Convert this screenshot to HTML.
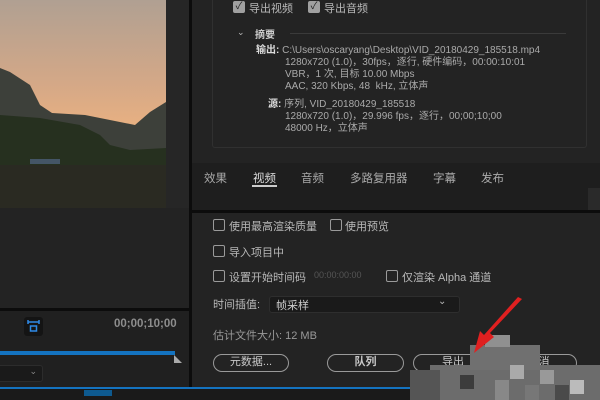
<!DOCTYPE html>
<html><head><meta charset="utf-8"><style>
body{margin:0;width:600px;height:400px;overflow:hidden;background:#1e1e1e;font-family:"Liberation Sans","Noto Sans CJK SC",sans-serif;position:relative;color:#b8b8b8}
div{position:absolute;box-sizing:border-box}
.t{font-size:11px;white-space:nowrap}
.cb{width:12px;height:12px;border:1.5px solid #9a9a9a;border-radius:2px}
.cbc{width:12px;height:12px;background:#a0a0a0;border-radius:2px;color:#222;font-size:10px;line-height:12px;text-align:center}
.btn{height:18px;border:1.5px solid #9a9a9a;border-radius:9px;font-size:11px;text-align:center;line-height:15px;color:#c8c8c8}
.s{font-size:10px;line-height:12px;color:#aaa}
</style></head><body>
<div style="left:0;top:0;width:166px;height:208px;background:linear-gradient(180deg,#b0a092 0%,#d4a887 40%,#e7b082 60%,#3a3a2a 62%,#2c3020 100%)"></div>
<svg style="position:absolute;left:0;top:0" width="166" height="208">
<polygon points="0,68 10,72 30,85 40,105 52,113 85,115 100,118 135,125 150,112 166,102 166,208 0,208" fill="#3d403a"/>
<polygon points="0,115 40,118 80,125 100,135 110,145 130,150 166,148 166,208 0,208" fill="#26301f"/>
<rect x="0" y="165" width="166" height="43" fill="#2a2a22"/>
<rect x="30" y="159" width="30" height="5" fill="#445566"/>
</svg>
<div style="left:166px;top:0;width:24px;height:400px;background:#262626"></div>
<div style="left:189px;top:0;width:3px;height:400px;background:#0c0c0c"></div>
<div style="left:0;top:208px;width:189px;height:100px;background:#232323"></div>
<div style="left:0;top:308px;width:189px;height:3px;background:#0c0c0c"></div>
<div style="left:0;top:311px;width:189px;height:77px;background:#202020"></div>
<div style="left:24px;top:317px;width:19px;height:19px;background:#141414;border-radius:3px"></div>
<svg style="position:absolute;left:26px;top:319px" width="15" height="15"><path d="M2 3H13M2 1V5M13 1V5M4.5 7H10.5V12H4.5Z" stroke="#2e8ae6" stroke-width="1.5" fill="none"/></svg>
<div class="t" style="left:114px;top:318px;font-size:11.5px;font-weight:bold;color:#8d8d8d">00;00;10;00</div>
<div style="left:0;top:351px;width:175px;height:4px;background:#1473c0"></div>
<svg style="position:absolute;left:174px;top:355px" width="10" height="10"><polygon points="0,0 0,8 8,8" fill="#aaa"/></svg>
<div style="left:-5px;top:365px;width:48px;height:17px;background:#1a1a1a;border:1px solid #2c2c2c;border-radius:3px;font-size:9px;color:#888;text-align:right;padding-right:5px">⌄</div>
<div style="left:0;top:387px;width:600px;height:2px;background:#1473c0"></div>
<div style="left:0;top:389px;width:600px;height:11px;background:#1a1a1a"></div>
<div style="left:84px;top:390px;width:28px;height:6px;background:#0e5a8f"></div>
<div style="left:192px;top:0;width:408px;height:163px;background:#232323"></div>
<div style="left:212px;top:-5px;width:375px;height:153px;border:1px solid #303030;border-radius:3px"></div>
<div class="cbc" style="left:233px;top:1px">✓</div><div class="t" style="left:249px;top:0;color:#b8b8b8">导出视频</div>
<div class="cbc" style="left:308px;top:1px">✓</div><div class="t" style="left:324px;top:0;color:#b8b8b8">导出音频</div>
<div class="t" style="left:237px;top:27px;font-size:9px">⌄</div>
<div class="t" style="left:255px;top:26px;font-weight:bold;color:#ccc;font-size:10px">摘要</div>
<div style="left:290px;top:33px;width:276px;height:1px;background:#3a3a3a"></div>
<div class="t s" style="left:256px;top:45px"><b style="color:#ddd">输出:</b> C:\Users\oscaryang\Desktop\VID_20180429_185518.mp4</div>
<div class="t s" style="left:285px;top:57px">1280x720 (1.0)，30fps，逐行, 硬件编码，00:00:10:01<br>VBR，1 次, 目标 10.00 Mbps<br>AAC, 320 Kbps, 48 &nbsp;kHz, 立体声</div>
<div class="t s" style="left:268px;top:99px"><b style="color:#ddd">源:</b> 序列, VID_20180429_185518</div>
<div class="t s" style="left:285px;top:111px">1280x720 (1.0)，29.996 fps，逐行，00;00;10;00<br>48000 Hz，立体声</div>
<div class="t" style="left:204px;top:170px;color:#aaa;font-size:11.5px">效果</div>
<div class="t" style="left:253px;top:170px;color:#ddd;font-size:11.5px">视频</div>
<div style="left:252px;top:185px;width:25px;height:2px;background:#ccc"></div>
<div class="t" style="left:301px;top:170px;color:#aaa;font-size:11.5px">音频</div>
<div class="t" style="left:350px;top:170px;color:#aaa;font-size:11.5px">多路复用器</div>
<div class="t" style="left:433px;top:170px;color:#aaa;font-size:11.5px">字幕</div>
<div class="t" style="left:481px;top:170px;color:#aaa;font-size:11.5px">发布</div>
<div style="left:192px;top:188px;width:408px;height:22px;background:#1e1e1e"></div>
<div style="left:588px;top:188px;width:12px;height:22px;background:#2a2a2a"></div>
<div style="left:192px;top:210px;width:408px;height:3px;background:#0c0c0c"></div>
<div style="left:192px;top:213px;width:408px;height:174px;background:#232323"></div>
<div class="cb" style="left:213px;top:219px"></div><div class="t" style="left:229px;top:218px">使用最高渲染质量</div>
<div class="cb" style="left:330px;top:219px"></div><div class="t" style="left:345px;top:218px">使用预览</div>
<div class="cb" style="left:213px;top:245px"></div><div class="t" style="left:229px;top:244px">导入项目中</div>
<div class="cb" style="left:213px;top:270px"></div><div class="t" style="left:229px;top:269px">设置开始时间码</div>
<div class="t" style="left:314px;top:270px;font-size:9px;color:#555">00:00:00:00</div>
<div class="cb" style="left:386px;top:270px"></div><div class="t" style="left:402px;top:269px">仅渲染 Alpha 通道</div>
<div class="t" style="left:213px;top:296px">时间插值:</div>
<div style="left:269px;top:296px;width:191px;height:17px;background:#1a1a1a;border:1px solid #2e2e2e;border-radius:3px"></div>
<div class="t" style="left:276px;top:297px;color:#ccc">帧采样</div>
<div class="t" style="left:438px;top:296px;font-size:10px">⌄</div>
<div class="t" style="left:213px;top:327px;color:#999">估计文件大小: 12 MB</div>
<div class="btn" style="left:213px;top:354px;width:76px">元数据...</div>
<div class="btn" style="left:327px;top:354px;width:77px;font-weight:bold">队列</div>
<div class="btn" style="left:413px;top:354px;width:80px">导出</div>
<div class="btn" style="left:500px;top:354px;width:77px">取消</div>
<svg style="position:absolute;left:400px;top:330px" width="200" height="70">
<rect x="30" y="35" width="170" height="35" fill="#6c6c6c"/>
<rect x="10" y="40" width="30" height="30" fill="#555"/>
<rect x="70" y="15" width="70" height="25" fill="#707070"/>
<rect x="85" y="5" width="25" height="12" fill="#909090"/>
<rect x="60" y="45" width="14" height="14" fill="#3c3c3c"/>
<rect x="110" y="35" width="14" height="14" fill="#aaa"/>
<rect x="140" y="40" width="14" height="14" fill="#999"/>
<rect x="170" y="50" width="14" height="14" fill="#bbb"/>
<rect x="95" y="50" width="14" height="20" fill="#888"/>
<rect x="155" y="55" width="14" height="15" fill="#4a4a4a"/>
<rect x="125" y="55" width="14" height="15" fill="#777"/>
</svg>
<svg style="position:absolute;left:460px;top:295px" width="70" height="70"><polygon points="62,4 30,38 34,42 14,58 20,36 24,40 58,2" fill="#e02020"/></svg>
</body></html>
